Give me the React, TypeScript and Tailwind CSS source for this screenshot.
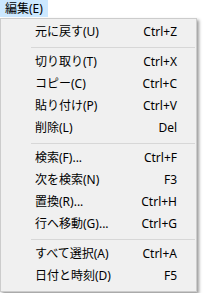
import React from 'react';

type Item = { label: string; shortcut: string } | 'sep';

const items: Item[] = [
  { label: '元に戻す(U)', shortcut: 'Ctrl+Z' },
  'sep',
  { label: '切り取り(T)', shortcut: 'Ctrl+X' },
  { label: 'コピー(C)', shortcut: 'Ctrl+C' },
  { label: '貼り付け(P)', shortcut: 'Ctrl+V' },
  { label: '削除(L)', shortcut: 'Del' },
  'sep',
  { label: '検索(F)...', shortcut: 'Ctrl+F' },
  { label: '次を検索(N)', shortcut: 'F3' },
  { label: '置換(R)...', shortcut: 'Ctrl+H' },
  { label: '行へ移動(G)...', shortcut: 'Ctrl+G' },
  'sep',
  { label: 'すべて選択(A)', shortcut: 'Ctrl+A' },
  { label: '日付と時刻(D)', shortcut: 'F5' },
];

const App: React.FC = () => {
  return (
    <div className="w-[203px] h-[293px] bg-white text-[12px] text-black font-['Noto_Sans','Noto_Sans_CJK_JP',sans-serif] overflow-hidden">
      {/* menu bar */}
      <div className="h-[18px] flex">
        <div className="h-[17px] bg-[#cce8ff] flex items-center px-[5px] leading-none whitespace-nowrap">
          編集(E)
        </div>
      </div>

      {/* dropdown */}
      <div className="w-[197px] bg-[#f0f0f0] border border-[#cccccc] pt-[2px] pb-[4px] shadow-[2px_2px_3px_rgba(0,0,0,0.4)]">
        {items.map((it, i) =>
          it === 'sep' ? (
            <div key={i} className="h-[8px] flex items-center pl-[30px] pr-[1px]">
              <div className="h-px w-full bg-[#d7d7d7]" />
            </div>
          ) : (
            <div key={i} className="h-[22px] flex items-center justify-between pl-[34px] pr-[19px] leading-none">
              <span>{it.label}</span>
              <span>{it.shortcut}</span>
            </div>
          )
        )}
      </div>
    </div>
  );
};

export default App;
